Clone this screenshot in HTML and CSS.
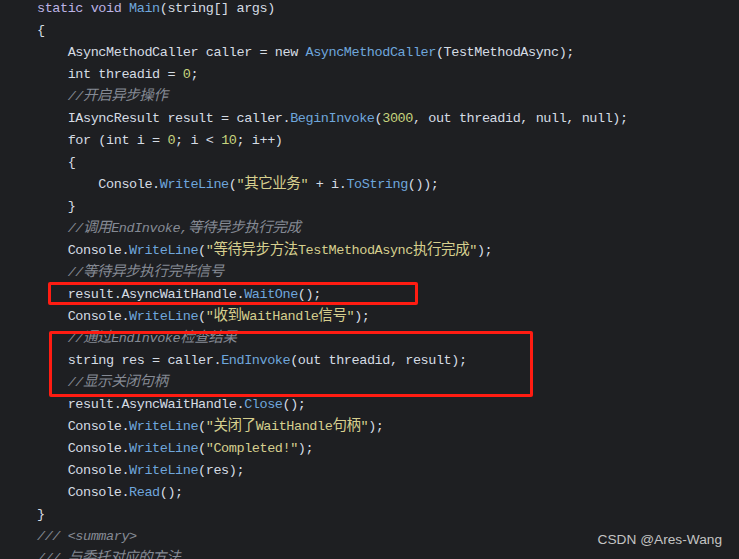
FILE: index.html
```html
<!DOCTYPE html>
<html lang="en">
<head>
    <meta charset="UTF-8">
    <meta name="viewport" content="width=device-width, initial-scale=1.0">
    <title>Main</title>
    <link rel="stylesheet" href="styles.css">
</head>
<body>
    <div class="editor">
        <div class="code">
            <div class="ln"><span class="kw">static</span> <span class="kw">void</span> <span class="fn">Main</span>(string[] args)</div>
            <div class="ln">{</div>
            <div class="ln">    AsyncMethodCaller caller = new <span class="fn">AsyncMethodCaller</span>(TestMethodAsync);</div>
            <div class="ln">    int threadid = <span class="num">0</span>;</div>
            <div class="ln">    <span class="cm">//<span class="zh">开启异步操作</span></span></div>
            <div class="ln">    IAsyncResult result = caller.<span class="fn">BeginInvoke</span>(<span class="num">3000</span>, out threadid, null, null);</div>
            <div class="ln">    for (int i = <span class="num">0</span>; i &lt; <span class="num">10</span>; i++)</div>
            <div class="ln">    {</div>
            <div class="ln">        Console.<span class="fn">WriteLine</span>(<span class="str">"<span class="zh">其它业务</span>"</span> + i.<span class="fn">ToString</span>());</div>
            <div class="ln">    }</div>
            <div class="ln">    <span class="cm">//<span class="zh">调用</span>EndInvoke,<span class="zh">等待异步执行完成</span></span></div>
            <div class="ln">    Console.<span class="fn">WriteLine</span>(<span class="str">"<span class="zh">等待异步方法</span>TestMethodAsync<span class="zh">执行完成</span>"</span>);</div>
            <div class="ln">    <span class="cm">//<span class="zh">等待异步执行完毕信号</span></span></div>
            <div class="ln">    result.AsyncWaitHandle.<span class="fn">WaitOne</span>();</div>
            <div class="ln">    Console.<span class="fn">WriteLine</span>(<span class="str">"<span class="zh">收到</span>WaitHandle<span class="zh">信号</span>"</span>);</div>
            <div class="ln">    <span class="cm">//<span class="zh">通过</span>EndInvoke<span class="zh">检查结果</span></span></div>
            <div class="ln">    string res = caller.<span class="fn">EndInvoke</span>(out threadid, result);</div>
            <div class="ln">    <span class="cm">//<span class="zh">显示关闭句柄</span></span></div>
            <div class="ln">    result.AsyncWaitHandle.<span class="fn">Close</span>();</div>
            <div class="ln">    Console.<span class="fn">WriteLine</span>(<span class="str">"<span class="zh">关闭了</span>WaitHandle<span class="zh">句柄</span>"</span>);</div>
            <div class="ln">    Console.<span class="fn">WriteLine</span>(<span class="str">"Completed!"</span>);</div>
            <div class="ln">    Console.<span class="fn">WriteLine</span>(res);</div>
            <div class="ln">    Console.<span class="fn">Read</span>();</div>
            <div class="ln">}</div>
            <div class="ln"><span class="cm">/// &lt;summary&gt;</span></div>
            <div class="ln"><span class="cm">/// <span class="zh">与委托对应的方法</span></span></div>
        </div>

        <!-- red highlight boxes drawn over the code -->
        <div class="mark mark-wait"></div>
        <div class="mark mark-end"></div>

        <div class="watermark">CSDN @Ares-Wang</div>
    </div>
</body>
</html>
```

FILE: styles.css
```css
body {
    margin: 0;
    padding: 0;
    background-color: #1e1f22;
    overflow: hidden;
}
.editor {
    position: relative;
    width: 739px;
    height: 559px;
    overflow: hidden;
}
.code {
    margin-top: -2px;
    padding-left: 37px;
    font-family: "Liberation Mono", "Noto Sans CJK SC", monospace;
    font-size: 13.5px;
    letter-spacing: -0.43px;
    color: #d5dce4;
}
.ln {
    height: 22px;
    line-height: 22px;
    white-space: pre;
    overflow: visible;
}
.zh {
    font-family: "Noto Sans CJK SC", sans-serif;
    font-size: 14.5px;
    line-height: 0;
}
.kw {
    color: #bcb3e4;
}
.fn {
    color: #6ea6dc;
}
.str {
    color: #d6cf8e;
}
.num {
    color: #c6d47e;
}
.cm {
    color: #858a94;
    font-style: italic;
}
.mark {
    position: absolute;
    box-sizing: border-box;
    border: 3px solid #ff1c12;
    border-radius: 2px;
}
.mark-wait {
    left: 48px;
    top: 282px;
    width: 370px;
    height: 23px;
}
.mark-end {
    left: 49px;
    top: 331px;
    width: 484px;
    height: 66px;
}
.watermark {
    position: absolute;
    right: 17px;
    top: 532px;
    font-family: "Liberation Sans", Arial, sans-serif;
    font-size: 13.7px;
    color: #c4c4c4;
}
```
